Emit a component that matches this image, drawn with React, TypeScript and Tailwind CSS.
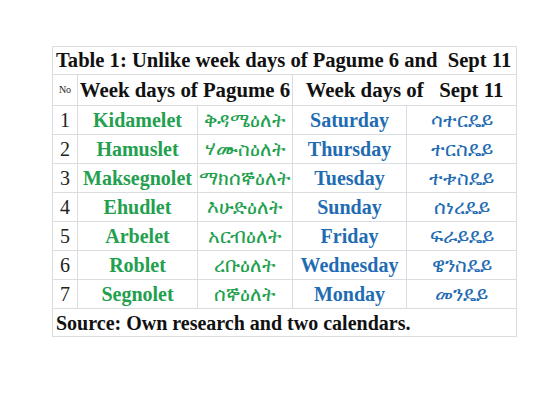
const rows = [
  { no: "1", en: "Kidamelet", am: "ቅዳሜዕለት", day: "Saturday", dayAm: "ሳተርዴይ" },
  { no: "2", en: "Hamuslet", am: "ሃሙስዕለት", day: "Thursday", dayAm: "ተርስዴይ" },
  { no: "3", en: "Maksegnolet", am: "ማክሰኞዕለት", day: "Tuesday", dayAm: "ተቱስዴይ" },
  { no: "4", en: "Ehudlet", am: "እሁድዕለት", day: "Sunday", dayAm: "ሰነረዴይ" },
  { no: "5", en: "Arbelet", am: "አርብዕለት", day: "Friday", dayAm: "ፍራይዴይ" },
  { no: "6", en: "Roblet", am: "ረቡዕለት", day: "Wednesday", dayAm: "ዌንስዴይ" },
  { no: "7", en: "Segnolet", am: "ሰኞዕለት", day: "Monday", dayAm: "መንዴይ" },
];

const cell = "border border-[#d9dde2] p-0 text-center leading-none";

export default function App() {
  return (
    <div className="min-h-[420px] w-[560px] bg-white pl-[52px] pt-[46px] font-['Liberation_Serif',serif]">
      <table className="w-[464px] table-fixed border-collapse">
        <colgroup>
          <col className="w-[25px]" />
          <col className="w-[120px]" />
          <col className="w-[95px]" />
          <col className="w-[114px]" />
          <col className="w-[110px]" />
        </colgroup>
        <tbody>
          <tr className="h-[28px]">
            <td colSpan={5} className={`${cell} whitespace-nowrap pl-[3px] text-left text-[20.6px] font-bold text-[#111]`}>
              Table 1: Unlike week days of Pagume 6 and&nbsp; Sept 11
            </td>
          </tr>
          <tr className="h-[31px]">
            <td className={`${cell} text-[10px] text-[#222]`}>No</td>
            <td colSpan={2} className={`${cell} whitespace-nowrap text-[20.8px] font-bold text-[#111]`}>
              Week days of Pagume 6
            </td>
            <td colSpan={2} className={`${cell} whitespace-nowrap text-[20.8px] font-bold text-[#111]`}>
              Week days of&nbsp;&nbsp; Sept 11
            </td>
          </tr>
          {rows.map((r) => (
            <tr key={r.no} className="h-[29px]">
              <td className={`${cell} text-[20px] text-[#222]`}>{r.no}</td>
              <td className={`${cell} whitespace-nowrap text-[20px] font-bold text-[#23a04e]`}>{r.en}</td>
              <td className={`${cell} whitespace-nowrap text-[20px] text-[#23a04e]`}>{r.am}</td>
              <td className={`${cell} whitespace-nowrap text-[20px] font-bold text-[#1f6cb3]`}>{r.day}</td>
              <td className={`${cell} whitespace-nowrap text-[20px] text-[#1f6cb3]`}>{r.dayAm}</td>
            </tr>
          ))}
          <tr className="h-[28px]">
            <td colSpan={5} className={`${cell} whitespace-nowrap pl-[3px] text-left text-[20px] font-bold text-[#111]`}>
              Source: Own research and two calendars.
            </td>
          </tr>
        </tbody>
      </table>
    </div>
  );
}
